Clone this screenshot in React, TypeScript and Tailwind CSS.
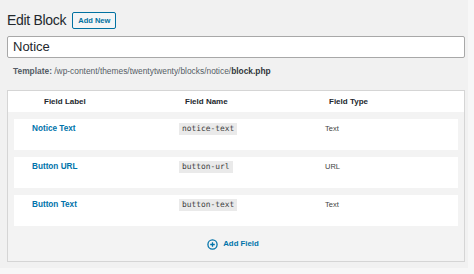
import React from "react";

const rows = [
  { label: "Notice Text", name: "notice-text", type: "Text" },
  { label: "Button URL", name: "button-url", type: "URL" },
  { label: "Button Text", name: "button-text", type: "Text" },
];

export default function App() {
  return (
    <div
      className="w-[474px] h-[274px] bg-[#f7f7f7] overflow-hidden"
      style={{ fontFamily: '"Liberation Sans", Arial, sans-serif' }}
    >
      <div className="w-[468px] h-[268px] bg-[#f1f1f1] pl-[7px] pr-[3px] pt-[12px]">
        <div className="flex items-center h-[16px]">
          <h1 className="text-[14px] leading-[16px] text-[#23282d] tracking-[-0.3px]">Edit Block</h1>
          <button className="ml-[6px] h-[17px] px-[5px] border border-[#0071a1] rounded-[2px] bg-[#f3f5f6] text-[#0071a1] text-[7.5px] font-bold leading-[15px]">
            Add New
          </button>
        </div>
        <div className="mt-[8px] h-[22px] w-[458px] bg-white border border-[#a8a8a8] rounded-[2px] flex items-center pl-[5px]">
          <span className="text-[13px] text-[#23282d]">Notice</span>
        </div>
        <div className="mt-[8px] h-[10px] pl-[6px] text-[8.4px] leading-[10px] text-[#555d66]">
          <span className="font-bold">Template:</span> /wp-content/themes/twentytwenty/blocks/notice/
          <span className="font-bold text-[#32373c]">block.php</span>
        </div>
        <div className="mt-[14px] w-[458px] h-[172px] border border-[#d5d5d5] bg-[#f3f3f3]">
          <div className="h-[21px] bg-white flex items-center pl-[36px] text-[8px] font-bold text-[#23282d]">
            <div className="w-[141px]">Field Label</div>
            <div className="w-[144px]">Field Name</div>
            <div>Field Type</div>
          </div>
          <div className="px-[6px] pt-[7px] flex flex-col gap-[7px]">
            {rows.map((r) => (
              <div key={r.name} className="h-[31px] bg-white flex items-start pt-[4px] pl-[18px] leading-[12px]">
                <div className="w-[147px] h-[12px] leading-[12px] text-[8.2px] font-bold text-[#0073aa]">
                  {r.label}
                </div>
                <div className="w-[146px] h-[12px] flex items-start">
                  <span
                    className="block h-[12px] leading-[12px] px-[3px] bg-[#eaeaea] text-[7.9px] text-[#3c3c3c]"
                    style={{ fontFamily: '"DejaVu Sans Mono", "Liberation Mono", monospace' }}
                  >
                    {r.name}
                  </span>
                </div>
                <div className="h-[12px] leading-[12px] text-[7.5px] text-[#444]">{r.type}</div>
              </div>
            ))}
          </div>
          <div className="mt-[10px] h-[16px] flex items-center justify-center gap-[5px] pr-[6px]">
            <svg width="11" height="11" viewBox="0 0 12 12" fill="none" stroke="#0073aa" strokeWidth="1.4">
              <circle cx="6" cy="6" r="5" />
              <path d="M6 3.5v5M3.5 6h5" />
            </svg>
            <span className="text-[7.8px] font-bold text-[#0073aa]">Add Field</span>
          </div>
        </div>
      </div>
    </div>
  );
}
